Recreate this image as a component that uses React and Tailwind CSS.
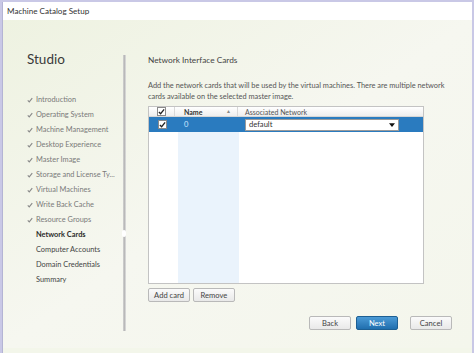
import React from 'react';

const steps = [
  { label: 'Introduction', done: true },
  { label: 'Operating System', done: true },
  { label: 'Machine Management', done: true },
  { label: 'Desktop Experience', done: true },
  { label: 'Master Image', done: true },
  { label: 'Storage and License Ty...', done: true },
  { label: 'Virtual Machines', done: true },
  { label: 'Write Back Cache', done: true },
  { label: 'Resource Groups', done: true },
  { label: 'Network Cards', current: true },
  { label: 'Computer Accounts' },
  { label: 'Domain Credentials' },
  { label: 'Summary' },
];

const Check = ({ className = '' }) => (
  <svg viewBox="0 0 8 8" className={className}>
    <path d="M1 4.5 L3 6.5 L7 1.5" fill="none" stroke="currentColor" strokeWidth="1.5" />
  </svg>
);

const Box = ({ className = '' }) => (
  <div className={`w-[9px] h-[9px] bg-white border border-[#8a8a8a] flex items-center justify-center ${className}`}>
    <Check className="w-[7px] h-[7px] text-[#222]" />
  </div>
);

const Btn = ({ children, primary, className = '' }) => (
  <button
    className={
      primary
        ? `h-[14px] w-[42px] rounded-[2px] border border-[#1d5f93] bg-gradient-to-b from-[#4b9ad6] to-[#1f6fae] text-white text-[7.6px] ${className}`
        : `h-[14px] w-[42px] rounded-[2px] border border-[#b9b9b9] bg-gradient-to-b from-[#fbfbfb] to-[#e9e9e9] text-[#444] text-[7.6px] ${className}`
    }
  >
    {children}
  </button>
);

export default function App() {
  return (
    <div className="w-[474px] h-[353px] bg-[#c9c8e6] pt-[2px] overflow-hidden" style={{ fontFamily: 'Lato, "Open Sans", sans-serif' }}>
      <div className="ml-[2px] mr-[2px] h-[351px] bg-white flex flex-col border-l border-[#b4b4d4]">
        <div className="h-[18px] flex items-center pl-[4px] text-[8.1px] text-[#333] bg-white">Machine Catalog Setup</div>
        <div className="flex-1 flex bg-gradient-to-br from-[#eef2e1] via-[#f6f7f0] to-[#f4f6ec]">
          {/* sidebar */}
          <div className="w-[120px] shrink-0 pl-[24px] pt-[33px] relative">
            <div className="text-[13.5px] text-[#3a3a3a] leading-none">Studio</div>
            <div className="mt-[26px] flex flex-col">
              {steps.map((s) => (
                <div key={s.label} className="h-[15px] flex items-center text-[7.4px] whitespace-nowrap">
                  <span className="w-[9px] flex items-center">
                    {s.done && <Check className="w-[6px] h-[6px] text-[#8a8a8a]" />}
                  </span>
                  <span className={s.current ? 'font-bold text-[#2b2b2b]' : s.done ? 'text-[#7a7a7a]' : 'text-[#444]'}>{s.label}</span>
                </div>
              ))}
            </div>
          </div>
          <div className="w-[3px] shrink-0 mt-[35px] mb-[17px] bg-gradient-to-r from-[#d2d2d2] via-[#b9b9b9] to-[#e2e2e2] relative">
            <div className="absolute left-[-1px] top-[175px] w-[4px] h-[7px] bg-white rounded-full" />
          </div>
          {/* content */}
          <div className="flex-1 pl-[22px] pt-[36px] pr-[8px] flex flex-col">
            <div className="text-[8.3px] text-[#444] leading-none">Network Interface Cards</div>
            <div className="mt-[16px] w-[298px] text-[7.4px] leading-[11px] text-[#555]">
              Add the network cards that will be used by the virtual machines. There are multiple network cards available on the selected master image.
            </div>
            <div className="mt-[4px] w-[276px] h-[178px] bg-white border border-[#c3c3c3] flex flex-col relative">
              <div className="h-[10px] flex items-center bg-gradient-to-b from-[#ffffff] to-[#eeeeee] border-b border-[#d6d6d6] text-[7px]">
                <div className="w-[26px] h-full flex items-center justify-center border-r border-[#d8d8d8]">
                  <Box />
                </div>
                <div className="w-[63px] h-full flex items-center pl-[9px] border-r border-[#d8d8d8] relative">
                  <span className="font-bold text-[#333]">Name</span>
                  <span className="absolute right-[6px] text-[5px] text-[#888]">▲</span>
                </div>
                <div className="pl-[7px] text-[#555]">Associated Network</div>
              </div>
              <div className="h-[15px] flex items-center bg-[#2a7bbf] text-[7.6px]">
                <div className="w-[26px] flex justify-center">
                  <Box />
                </div>
                <div className="w-[63px] pl-[9px] text-[#c9e6ff]">0</div>
                <div className="ml-[7px] w-[154px] h-[12px] bg-white border border-[#9a9a9a] flex items-center justify-between px-[3px] text-[#333]">
                  <span>default</span>
                  <svg viewBox="0 0 8 5" className="w-[6px] h-[4px]"><path d="M0 0 H8 L4 5 Z" fill="#111" /></svg>
                </div>
              </div>
              <div className="flex-1 flex">
                <div className="w-[29px]" />
                <div className="w-[61px] bg-[#eaf3fc]" />
              </div>
            </div>
            <div className="mt-[4px] flex gap-[3px]">
              <Btn>Add card</Btn>
              <Btn>Remove</Btn>
            </div>
            <div className="mt-[14px] flex justify-end gap-[5px] w-[304px]">
              <Btn>Back</Btn>
              <Btn primary className="mr-[7px]">Next</Btn>
              <Btn>Cancel</Btn>
            </div>
          </div>
        </div>
        <div className="h-[5px] bg-[#f3f6ea]" />
      </div>
    </div>
  );
}
